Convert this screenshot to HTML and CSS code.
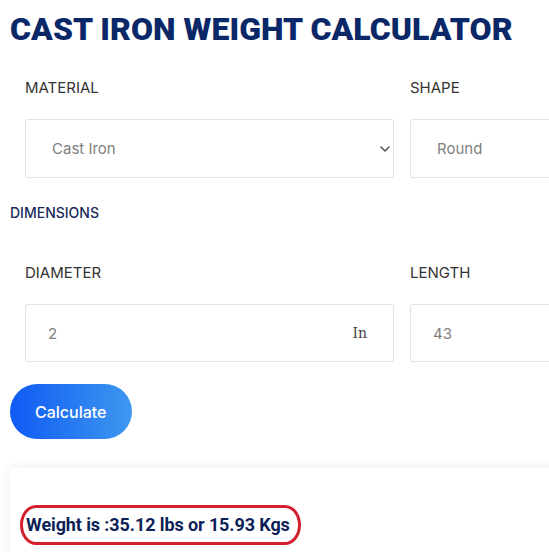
FILE: index.html
```html
<!DOCTYPE html>
<html lang="en">
<head>
<meta charset="utf-8">
<title>Cast Iron Weight Calculator</title>
<link rel="stylesheet" href="styles.css">
</head>
<body>
<div class="page">
  <h1 class="title">CAST IRON WEIGHT CALCULATOR</h1>

  <div class="row row-first">
    <div class="col">
      <div class="lbl">MATERIAL</div>
      <div class="field field-select">
        <span class="val">Cast Iron</span>
        <svg class="chev" width="10" height="6" viewBox="0 0 10 6"><polyline points="1,1 5,5 9,1" fill="none" stroke="#555" stroke-width="1.6" stroke-linecap="round" stroke-linejoin="round"/></svg>
      </div>
    </div>
    <div class="col">
      <div class="lbl">SHAPE</div>
      <div class="field field-select">
        <span class="val">Round</span>
      </div>
    </div>
  </div>

  <div class="section">DIMENSIONS</div>

  <div class="row row-dim">
    <div class="col">
      <div class="lbl">DIAMETER</div>
      <div class="field field-input">
        <span class="val">2</span>
        <span class="unit">In</span>
      </div>
    </div>
    <div class="col">
      <div class="lbl">LENGTH</div>
      <div class="field field-input">
        <span class="val">43</span>
      </div>
    </div>
  </div>

  <button class="btn">Calculate</button>

  <div class="card">
    <div class="result">Weight is :35.12 lbs or 15.93 Kgs<span class="ring"></span></div>
  </div>
</div>
</body>
</html>
```

FILE: styles.css
```css
html, body {
  margin: 0;
  padding: 0;
  overflow: hidden;
  background: #ffffff;
}

.page {
  width: 785px;
  padding-left: 10px;
  font-family: "Inter", "Noto Sans", sans-serif;
}

.title {
  margin: 9px 0 0 0;
  font-family: "Roboto", "Liberation Sans", sans-serif;
  font-weight: 900;
  font-size: 32px;
  line-height: 40px;
  color: #0a2767;
  letter-spacing: 0.05px;
  white-space: nowrap;
}

.row {
  display: flex;
}

.row-first {
  margin-top: 29px;
}

.row-dim {
  margin-top: 41px;
}

.col {
  flex: 0 0 385px;
  padding: 0 1px 0 15px;
  box-sizing: border-box;
}

.lbl {
  font-size: 15px;
  line-height: 20px;
  color: #333333;
  font-weight: 400;
  margin-bottom: 21px;
}

.field {
  height: 59px;
  box-sizing: border-box;
  border: 1px solid #e3e3e3;
  border-radius: 3px;
  display: flex;
  align-items: center;
  justify-content: space-between;
  font-size: 15px;
  color: #808080;
}

.field-select {
  padding: 0 3px 0 26px;
}

.field-input {
  height: 58px;
  padding: 0 26px 0 22px;
}

.chev {
  display: block;
}

.unit {
  font-family: "DejaVu Serif", "Liberation Serif", serif;
  font-size: 14px;
  color: #444444;
}

.section {
  margin-top: 26px;
  font-size: 14px;
  line-height: 18px;
  font-weight: 500;
  color: #1b2b5b;
}

.btn {
  display: block;
  margin-top: 22px;
  height: 55px;
  padding: 0 25px;
  border: none;
  border-radius: 28px;
  background: linear-gradient(90deg, #0f5af4 0%, #3e98ef 100%);
  color: #ffffff;
  font-family: "Inter", "Noto Sans", sans-serif;
  font-size: 16px;
  font-weight: 500;
}

.card {
  margin-top: 29px;
  height: 120px;
  padding: 45px 16px 0 16px;
  box-sizing: border-box;
  background: #ffffff;
  box-shadow: 0 0 12px rgba(0, 0, 0, 0.07);
}

.result {
  position: relative;
  display: inline-block;
  font-family: "Roboto", "Liberation Sans", sans-serif;
  font-weight: 700;
  font-size: 18px;
  line-height: 24px;
  color: #0d1f57;
  letter-spacing: -0.1px;
  white-space: nowrap;
}

.ring {
  position: absolute;
  left: -6px;
  right: -11px;
  top: -8px;
  bottom: -8px;
  border: 3px solid #d3202f;
  border-radius: 16px / 20px;
}
```
